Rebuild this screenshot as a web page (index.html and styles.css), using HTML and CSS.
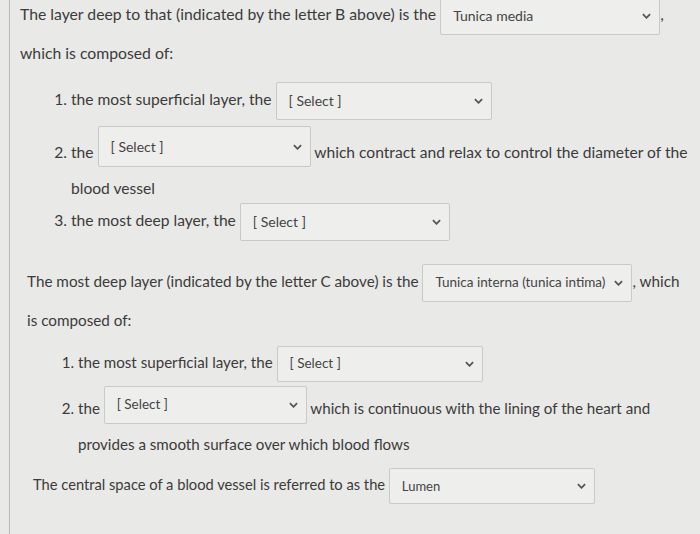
FILE: index.html
```html
<!DOCTYPE html>
<html lang="en">
<head>
  <meta charset="UTF-8">
  <meta name="viewport" content="width=device-width, initial-scale=1.0">
  <title>Blood vessel layers</title>
  <link rel="stylesheet" href="styles.css">
</head>
<body>

  <div class="panel">

    <!-- Tunica media -->
    <p class="question q-top">
      The layer deep to that (indicated by the letter B above) is the
      <span class="dropdown w-media"><span class="value">Tunica media</span><svg class="chev" viewBox="0 0 10 6"><path d="M1 1l4 4 4-4"/></svg></span>,
      which is composed of:
    </p>
    <ol class="parts parts-top">
      <li>the most superficial layer, the
        <span class="dropdown w-1"><span class="value">[ Select ]</span><svg class="chev" viewBox="0 0 10 6"><path d="M1 1l4 4 4-4"/></svg></span>
      </li>
      <li class="wrapped">the
        <span class="dropdown w-2"><span class="value">[ Select ]</span><svg class="chev" viewBox="0 0 10 6"><path d="M1 1l4 4 4-4"/></svg></span>
        which contract and relax to control the diameter of the blood vessel
      </li>
      <li>the most deep layer, the
        <span class="dropdown w-3"><span class="value">[ Select ]</span><svg class="chev" viewBox="0 0 10 6"><path d="M1 1l4 4 4-4"/></svg></span>
      </li>
    </ol>

    <!-- Tunica interna -->
    <p class="question q-mid">
      The most deep layer (indicated by the letter C above) is the
      <span class="dropdown w-interna"><span class="value">Tunica interna (tunica intima)</span><svg class="chev" viewBox="0 0 10 6"><path d="M1 1l4 4 4-4"/></svg></span>, which
      is composed of:
    </p>
    <ol class="parts parts-mid">
      <li>the most superficial layer, the
        <span class="dropdown w-4"><span class="value">[ Select ]</span><svg class="chev" viewBox="0 0 10 6"><path d="M1 1l4 4 4-4"/></svg></span>
      </li>
      <li>the
        <span class="dropdown w-5"><span class="value">[ Select ]</span><svg class="chev" viewBox="0 0 10 6"><path d="M1 1l4 4 4-4"/></svg></span>
        which is continuous with the lining of the heart and provides a smooth surface over which blood flows
      </li>
    </ol>

    <!-- Lumen -->
    <p class="question q-end">
      The central space of a blood vessel is referred to as the
      <span class="dropdown w-lumen"><span class="value">Lumen</span><svg class="chev" viewBox="0 0 10 6"><path d="M1 1l4 4 4-4"/></svg></span>
    </p>

  </div>

</body>
</html>
```

FILE: styles.css
```css
body {
  margin: 0;
  background-color: #e9e9e7;
  font-family: Lato, "Open Sans", sans-serif;
  color: #3b3b3b;
  overflow: hidden;
}
.panel {
  margin-left: 9px;
  padding-left: 10px;
  border-left: 1px solid #b9b9b6;
  height: 560px;
  width: 672px;
}
.question {
  margin: 0;
  line-height: 36px;
}
.q-top {
  margin-top: -4px;
  font-size: 15.75px;
}
.q-mid {
  margin-top: 22px;
  margin-left: 7px;
  font-size: 15.25px;
}
.q-end {
  margin-top: 3px;
  margin-left: 13px;
  font-size: 14.7px;
}
.parts {
  margin: 10px 0 0 0;
  padding-left: 51px;
  font-size: 15.6px;
  line-height: 36px;
}
.parts li {
  margin-bottom: 6px;
}
.parts li.wrapped {
  margin-bottom: -4px;
}
.parts-mid {
  margin-top: 6px;
  padding-left: 58px;
  font-size: 15.15px;
}
.parts-mid li {
  margin-bottom: 4px;
}
.dropdown {
  display: inline-flex;
  align-items: center;
  justify-content: space-between;
  box-sizing: border-box;
  height: 38px;
  padding: 0 8px 0 12px;
  vertical-align: middle;
  background-color: #eeeeec;
  border: 1px solid #c9c9c6;
  border-radius: 2px;
  font-size: 14px;
  color: #444;
  line-height: 1;
}
.q-mid .dropdown,
.parts-mid .dropdown {
  font-size: 13.5px;
}
.q-end .dropdown {
  font-size: 13px;
  height: 36px;
}
.dropdown .value {
  white-space: nowrap;
}
.chev {
  width: 9px;
  height: 6px;
  fill: none;
  stroke: #555;
  stroke-width: 2;
}
.w-media { width: 220px; }
.w-1 { width: 216px; }
.w-2 { width: 213px; height: 41px; vertical-align: 6px; }
.w-3 { width: 210px; }
.w-interna { width: 210px; }
.w-4 { width: 206px; height: 36px; }
.w-5 { width: 203px; vertical-align: 5px; }
.w-lumen { width: 206px; }
```
